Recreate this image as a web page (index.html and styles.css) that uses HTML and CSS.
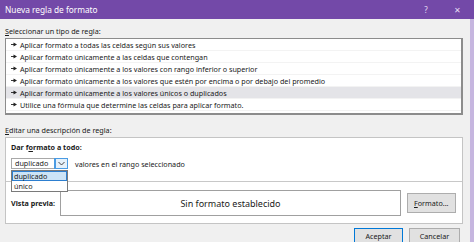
FILE: index.html
```html
<!DOCTYPE html>
<html lang="es">

<head>
  <meta charset="UTF-8" />
  <meta name="viewport" content="width=device-width, initial-scale=1.0" />
  <title>Nueva regla de formato</title>
  <link rel="stylesheet" href="styles.css">
</head>

<body>
  <div class="dialog">
    <div class="titlebar">
      <span class="title">Nueva regla de formato</span>
      <span class="title-btn help">?</span>
      <span class="title-btn close">&#x2715;</span>
    </div>

    <div class="content">
      <div class="section-label"><u>S</u>eleccionar un tipo de regla:</div>
      <ul class="rule-list">
        <li><svg class="arrow" width="6" height="5" viewBox="0 0 6 5"><path d="M0 2.5H3" stroke="#222" stroke-width="0.9" /><path d="M2.5 0.5L6 2.5L2.5 4.5Z" fill="#222" /></svg>Aplicar formato a todas las celdas según sus valores</li>
        <li><svg class="arrow" width="6" height="5" viewBox="0 0 6 5"><path d="M0 2.5H3" stroke="#222" stroke-width="0.9" /><path d="M2.5 0.5L6 2.5L2.5 4.5Z" fill="#222" /></svg>Aplicar formato únicamente a las celdas que contengan</li>
        <li><svg class="arrow" width="6" height="5" viewBox="0 0 6 5"><path d="M0 2.5H3" stroke="#222" stroke-width="0.9" /><path d="M2.5 0.5L6 2.5L2.5 4.5Z" fill="#222" /></svg>Aplicar formato únicamente a los valores con rango inferior o superior</li>
        <li><svg class="arrow" width="6" height="5" viewBox="0 0 6 5"><path d="M0 2.5H3" stroke="#222" stroke-width="0.9" /><path d="M2.5 0.5L6 2.5L2.5 4.5Z" fill="#222" /></svg>Aplicar formato únicamente a los valores que estén por encima o por debajo del promedio</li>
        <li class="selected"><svg class="arrow" width="6" height="5" viewBox="0 0 6 5"><path d="M0 2.5H3" stroke="#222" stroke-width="0.9" /><path d="M2.5 0.5L6 2.5L2.5 4.5Z" fill="#222" /></svg>Aplicar formato únicamente a los valores únicos o duplicados</li>
        <li><svg class="arrow" width="6" height="5" viewBox="0 0 6 5"><path d="M0 2.5H3" stroke="#222" stroke-width="0.9" /><path d="M2.5 0.5L6 2.5L2.5 4.5Z" fill="#222" /></svg>Utilice una fórmula que determine las celdas para aplicar formato.</li>
      </ul>

      <div class="section-label second"><u>E</u>ditar una descripción de regla:</div>
      <div class="desc">
        <div class="desc-top">
          <div class="bold-label">Dar f<u>o</u>rmato a todo:</div>
          <div class="combo-row">
            <div class="combo">
              <span class="combo-value">duplicado</span>
              <span class="combo-btn">
                <svg width="9" height="7" viewBox="0 0 9 7"><polyline points="1.5,2 4.5,5 7.5,2" fill="none" stroke="#333" stroke-width="0.9" /></svg>
              </span>
              <ul class="combo-list">
                <li class="active">duplicado</li>
                <li>único</li>
              </ul>
            </div>
            <span class="combo-text">valores en el rango seleccionado</span>
          </div>
        </div>
        <div class="desc-bottom">
          <span class="bold-label preview-label">Vista previa:</span>
          <div class="preview">Sin formato establecido</div>
          <button class="btn format-btn"><u>F</u>ormato...</button>
        </div>
      </div>

      <div class="actions">
        <button class="btn btn-default">Aceptar</button>
        <button class="btn">Cancelar</button>
      </div>
    </div>
  </div>
</body>

</html>
```

FILE: styles.css
```css
body {
  margin: 0;
  padding: 0;
  font-family: "Noto Sans", "Open Sans", sans-serif;
  font-size: 7.2px;
  color: #1a1a1a;
  background-color: #f0f0f0;
}

.dialog {
  width: 474px;
  height: 242px;
  display: flex;
  flex-direction: column;
  overflow: hidden;
}

.titlebar {
  height: 19px;
  background-color: #7349a8;
  color: white;
  display: flex;
  align-items: center;
  padding-left: 5px;
  flex-shrink: 0;
}

.title {
  font-size: 8.3px;
  flex: 1;
}

.title-btn {
  color: #e6dcf3;
  font-size: 8px;
  text-align: center;
}

.help {
  width: 14px;
  margin-right: 17px;
}

.close {
  width: 14px;
  margin-right: 10px;
}

.content {
  flex: 1;
  background-color: #f0f0f0;
  border-right: 4px solid #c6b6df;
  padding: 0 7px 0 5px;
  display: flex;
  flex-direction: column;
}

.section-label {
  height: 12px;
  line-height: 12px;
  margin-top: 6px;
  margin-bottom: 1px;
}

.section-label.second {
  margin-top: 9px;
}

.rule-list {
  list-style: none;
  margin: 0;
  padding: 0 0 2px 0;
  background: white;
  border: 1px solid #8c8c8c;
  border-right-width: 2px;
  border-bottom-width: 2px;
}

.rule-list li {
  height: 12px;
  line-height: 12px;
  padding-left: 5px;
  border-bottom: 1px solid #f3f3f3;
  box-sizing: border-box;
  white-space: nowrap;
  display: flex;
  align-items: center;
}

.rule-list li.selected {
  background-color: #e4e4e8;
}

.arrow {
  margin-right: 3px;
  flex-shrink: 0;
}

.desc {
  height: 87px;
  border: 1px solid #c4c4c4;
  background: white;
  display: flex;
  flex-direction: column;
  box-sizing: border-box;
}

.desc-top {
  height: 44px;
  padding: 3px 5px 0;
  border-bottom: 1px solid #c8c8c8;
  box-sizing: border-box;
}

.bold-label {
  font-weight: bold;
  height: 12px;
  line-height: 12px;
}

.combo-row {
  display: flex;
  align-items: center;
  margin-top: 5px;
}

.combo {
  position: relative;
  width: 57px;
  height: 11px;
  border: 1px solid #a8a8a8;
  box-sizing: border-box;
  display: flex;
  align-items: center;
  background: white;
}

.combo-value {
  flex: 1;
  padding-left: 3px;
  line-height: 9px;
}

.combo-btn {
  width: 12px;
  height: 9px;
  border-left: 1px solid #4a9be3;
  outline: 1px solid #4a9be3;
  background-color: #e5f1fb;
  display: flex;
  align-items: center;
  justify-content: center;
  box-sizing: border-box;
}

.combo-list {
  position: absolute;
  top: 11px;
  left: -1px;
  width: 57px;
  margin: 0;
  padding: 0;
  list-style: none;
  background: white;
  border: 1px solid #7a7a7a;
  box-sizing: border-box;
}

.combo-list li {
  height: 10px;
  line-height: 10px;
  padding-left: 2px;
  box-sizing: border-box;
}

.combo-list li.active {
  background-color: #cce4f7;
  border: 1px solid #2d7fd0;
  line-height: 8px;
  padding-left: 1px;
}

.combo-text {
  margin-left: 7px;
}

.desc-bottom {
  flex: 1;
  display: flex;
  align-items: center;
  padding: 0 6px 0 5px;
}

.preview-label {
  width: 50px;
}

.preview {
  width: 344px;
  height: 26px;
  border: 1px solid #a0a0a0;
  box-sizing: border-box;
  display: flex;
  align-items: center;
  justify-content: center;
  font-size: 9px;
  margin-top: 1px;
}

.btn {
  font-family: inherit;
  font-size: 7.2px;
  color: #1a1a1a;
  background-color: #e1e1e1;
  border: 1px solid #adadad;
  padding: 0;
  height: 16px;
  cursor: pointer;
}

.format-btn {
  width: 50px;
  height: 20px;
  margin-left: 6px;
}

.actions {
  display: flex;
  justify-content: flex-end;
  gap: 6px;
  margin-top: 4px;
  padding-right: 3px;
}

.actions .btn {
  width: 51px;
}

.actions .btn-default {
  width: 49px;
  border-color: #0078d7;
}
```
